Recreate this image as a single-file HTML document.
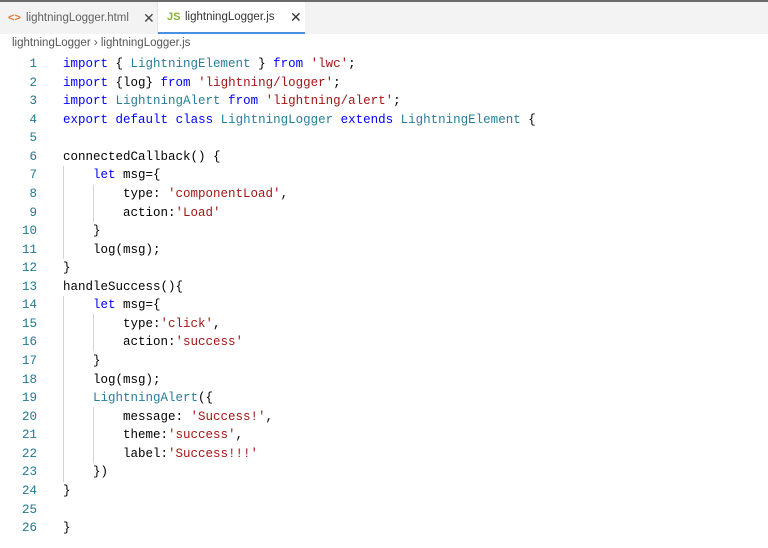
<!DOCTYPE html>
<html><head><style>
body{margin:0;width:768px;height:548px;background:#fff;overflow:hidden;font-family:"Liberation Sans",sans-serif;position:relative}
.top{position:absolute;top:0;left:0;width:768px;height:2px;background:#6b6b6b}
.tabs{position:absolute;top:2px;left:0;width:768px;height:32px;background:#f3f3f3}
.tab{position:absolute;top:0;height:32px;font-family:"Liberation Sans",sans-serif;font-size:11.5px;color:#616161;line-height:32px}
.t1{left:0;width:157px;border-right:1px solid #e5e5e5}
.t2{left:158px;width:147px;background:#fff;color:#333;height:30px;border-bottom:2px solid #4a90e2}
.bc{position:absolute;top:35px;left:12px;font-size:11.5px;color:#555;line-height:16px}
.code{position:absolute;top:55px;left:0;font-family:"Liberation Mono",monospace;font-size:12.5px;line-height:18.56px;white-space:pre;color:#000}
.ln{position:absolute;top:0;left:0;width:37px;text-align:right;color:#237893}
.tx{position:absolute;top:0;left:63px}
.k{color:#0000ff}.c{color:#267f99}.s{color:#a31515}
.g{position:absolute;width:1px;background:#d3d3d3}
</style></head><body>
<div class="top"></div>
<div class="tabs">
<div class="tab t1"><span style="position:absolute;left:8px;color:#e37933;font-weight:bold;font-size:11px">&lt;&gt;</span><span style="position:absolute;left:26px">lightningLogger.html</span><span style="position:absolute;left:143px;font-size:14px;color:#444">✕</span></div>
<div class="tab t2" style="line-height:30px"><span style="position:absolute;left:9px;color:#8bb33c;font-weight:bold;font-size:11px">JS</span><span style="position:absolute;left:27px">lightningLogger.js</span><span style="position:absolute;left:132px;font-size:14px;color:#333">✕</span></div>
</div>
<div class="bc">lightningLogger › lightningLogger.js</div>
<div class="g" style="left:63px;top:166px;height:93px"></div>
<div class="g" style="left:63px;top:296px;height:186px"></div>
<div class="g" style="left:93px;top:185px;height:37px"></div>
<div class="g" style="left:93px;top:314px;height:37px"></div>
<div class="g" style="left:93px;top:407px;height:56px"></div>
<div class="code"><div class="ln">1
2
3
4
5
6
7
8
9
10
11
12
13
14
15
16
17
18
19
20
21
22
23
24
25
26</div><div class="tx"><span class="k">import</span> { <span class="c">LightningElement</span> } <span class="k">from</span> <span class="s">'lwc'</span>;
<span class="k">import</span> {log} <span class="k">from</span> <span class="s">'lightning/logger'</span>;
<span class="k">import</span> <span class="c">LightningAlert</span> <span class="k">from</span> <span class="s">'lightning/alert'</span>;
<span class="k">export</span> <span class="k">default</span> <span class="k">class</span> <span class="c">LightningLogger</span> <span class="k">extends</span> <span class="c">LightningElement</span> {

connectedCallback() {
    <span class="k">let</span> msg={
        type: <span class="s">'componentLoad'</span>,
        action:<span class="s">'Load'</span>
    }
    log(msg);
}
handleSuccess(){
    <span class="k">let</span> msg={
        type:<span class="s">'click'</span>,
        action:<span class="s">'success'</span>
    }
    log(msg);
    <span class="c">LightningAlert</span>({
        message: <span class="s">'Success!'</span>,
        theme:<span class="s">'success'</span>,
        label:<span class="s">'Success!!!'</span>
    })
}

}</div></div>
</body></html>
